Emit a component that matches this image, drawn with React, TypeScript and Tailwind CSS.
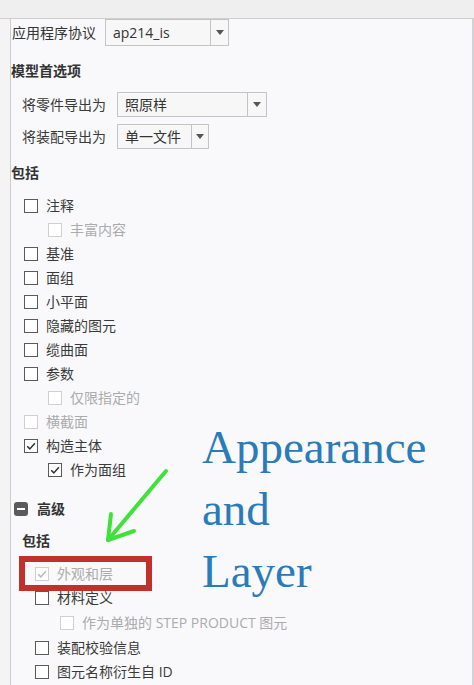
import clsx from "clsx";

type Item = {
  label: string;
  indent: string;
  checked?: boolean;
  disabled?: boolean;
  extra?: string;
};

const mainItems: Item[] = [
  { label: "注释", indent: "pl-[13px]" },
  { label: "丰富内容", indent: "pl-[37px]", disabled: true },
  { label: "基准", indent: "pl-[13px]" },
  { label: "面组", indent: "pl-[13px]" },
  { label: "小平面", indent: "pl-[13px]" },
  { label: "隐藏的图元", indent: "pl-[13px]" },
  { label: "缆曲面", indent: "pl-[13px]" },
  { label: "参数", indent: "pl-[13px]" },
  { label: "仅限指定的", indent: "pl-[37px]", disabled: true },
  { label: "横截面", indent: "pl-[13px]", disabled: true },
  { label: "构造主体", indent: "pl-[13px]", checked: true },
  { label: "作为面组", indent: "pl-[37px]", checked: true },
];

const advancedItems: Item[] = [
  { label: "外观和层", indent: "pl-[24px]", checked: true, disabled: true },
  { label: "材料定义", indent: "pl-[24px]" },
  { label: "作为单独的 STEP PRODUCT 图元", indent: "pl-[49px]", disabled: true, extra: "mt-[1px]" },
  { label: "装配校验信息", indent: "pl-[24px]", extra: "mt-[1px]" },
  { label: "图元名称衍生自 ID", indent: "pl-[24px]" },
];

function CheckBox({ checked, disabled }: { checked?: boolean; disabled?: boolean }) {
  return (
    <span
      className={clsx(
        "flex h-[14px] w-[14px] shrink-0 items-center justify-center border bg-white",
        disabled ? "border-[#d0d0d0]" : "border-[#5a5a5a]"
      )}
    >
      {checked && (
        <svg width="12" height="12" viewBox="0 0 12 12">
          <path
            d="M2.2 6.3 L4.8 8.9 L9.9 3.2"
            fill="none"
            stroke={disabled ? "#b8b8b8" : "#2e2e2e"}
            strokeWidth="1.5"
          />
        </svg>
      )}
    </span>
  );
}

function CheckRow({ item }: { item: Item }) {
  return (
    <div className={clsx("relative flex h-[24px] items-center gap-[8px]", item.indent, item.extra)}>
      <CheckBox checked={item.checked} disabled={item.disabled} />
      <span className={item.disabled ? "text-[#ababab]" : "text-[#3a3a3a]"}>{item.label}</span>
    </div>
  );
}

function Select({ value, width, arrow }: { value: string; width: string; arrow: string }) {
  return (
    <div className={clsx("flex h-full border border-[#c4c4c4] bg-[#f7f7f7]", width)}>
      <span className="flex flex-1 items-center pl-[7px] text-[#333]">{value}</span>
      <span className={clsx("flex items-center justify-center border-l border-[#c4c4c4]", arrow)}>
        <svg width="8" height="5" viewBox="0 0 8 5">
          <path d="M0 0 H8 L4 5 Z" fill="#555" />
        </svg>
      </span>
    </div>
  );
}

export default function App() {
  return (
    <div
      className="relative h-[685px] w-[474px] overflow-hidden bg-[#f9f9fb] text-[14px] leading-none"
      style={{ fontFamily: '"Open Sans", "Noto Sans CJK SC", sans-serif' }}
    >
      <div className="h-[19px] border-b border-[#cfcfcf] bg-[#efefef]" />
      <div className="flex h-[666px]">
        <div className="w-[10px] bg-[#f4f4f4]" />
        <div className="flex-1 border-l border-[#cdcdcd] bg-[#f9f9fb]">
          <div className="flex h-[27px] items-center">
            <span className="w-[94px] pl-[1px] text-[#333]">应用程序协议</span>
            <Select value="ap214_is" width="w-[124px]" arrow="w-[18px]" />
          </div>

          <div className="mt-[13px] flex h-[24px] items-center font-bold text-[#333]">模型首选项</div>

          <div className="mt-[9px] flex h-[25px] items-center pl-[11px]">
            <span className="w-[95px] text-[#3a3a3a]">将零件导出为</span>
            <Select value="照原样" width="w-[150px]" arrow="w-[19px]" />
          </div>
          <div className="mt-[7px] flex h-[25px] items-center pl-[11px]">
            <span className="w-[95px] text-[#3a3a3a]">将装配导出为</span>
            <Select value="单一文件" width="w-[92px]" arrow="w-[17px]" />
          </div>

          <div className="mt-[12px] flex h-[24px] items-center font-bold text-[#333]">包括</div>

          <div className="mt-[9px]">
            {mainItems.map((item) => (
              <CheckRow key={item.label} item={item} />
            ))}
          </div>

          <div className="mt-[15px] flex h-[24px] items-center gap-[9px] pl-[3px]">
            <span className="flex h-[14px] w-[14px] items-center justify-center rounded-[3px] bg-[#5a5a5a]">
              <span className="h-[2px] w-[8px] bg-white" />
            </span>
            <span className="font-bold text-[#333]">高级</span>
          </div>

          <div className="mt-[8px] flex h-[24px] items-center pl-[11px] font-bold text-[#333]">包括</div>

          <div className="mt-[9px]">
            {advancedItems.map((item) => (
              <CheckRow key={item.label} item={item} />
            ))}
          </div>
        </div>
        <div className="w-[2px] bg-[#d3d3d3]" />
      </div>

      {/* annotation overlays */}
      <div className="pointer-events-none absolute left-[19px] top-[556px] h-[35px] w-[133px] border-[6px] border-[#c1312b]" />

      <svg
        className="pointer-events-none absolute left-0 top-0"
        width="474"
        height="685"
        viewBox="0 0 474 685"
      >
        <g fill="none" stroke="#3fe23a" strokeWidth="4" strokeLinecap="round" strokeLinejoin="round">
          <path d="M166 471 L108 540" />
          <path d="M111 514 L108 540 L134 531" />
        </g>
      </svg>

      <div
        className="pointer-events-none absolute left-[202px] top-[416px] text-[47px] leading-[62px] text-[#2a7bb9]"
        style={{ fontFamily: '"Liberation Serif", serif' }}
      >
        <div>Appearance</div>
        <div>and</div>
        <div>Layer</div>
      </div>
    </div>
  );
}
